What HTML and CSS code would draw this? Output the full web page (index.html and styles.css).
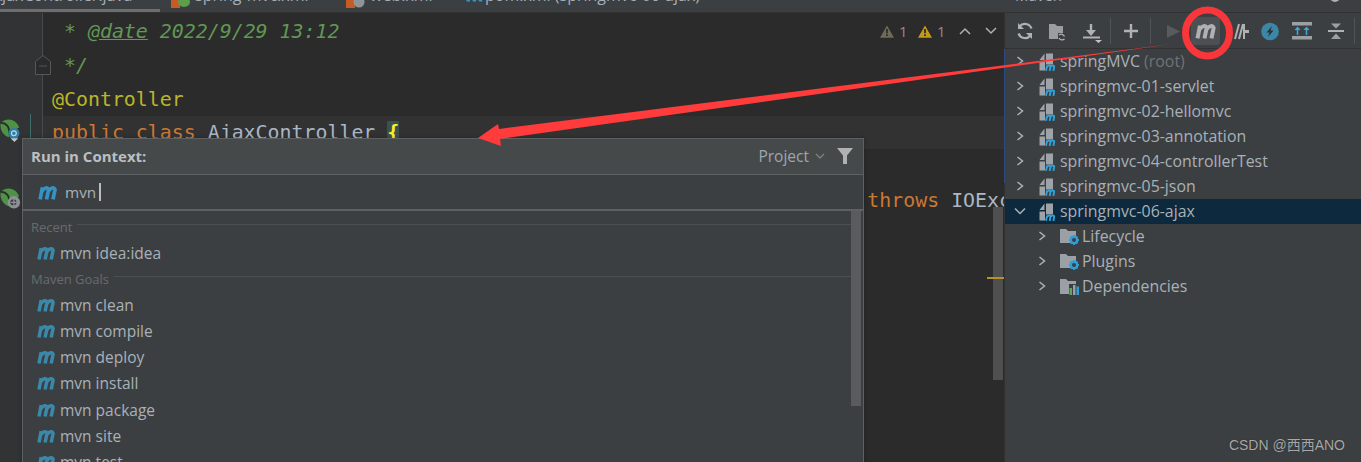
FILE: index.html
```html
<!DOCTYPE html>
<html lang="en">
<head>
<meta charset="utf-8">
<title>Run in Context</title>
<link rel="stylesheet" href="styles.css">
</head>
<body>
<svg class="defs" aria-hidden="true">
  <symbol id="m" viewBox="0 0 18 14"><path d="M2 13.500 4.200 2.200M3.900 5.600C5.600 2.400 9.600 1.600 10 4.400L8.100 13.500M10 5.600C11.700 2.400 15.800 1.600 16.100 4.400L14.200 13.500" fill="none" stroke="currentColor" stroke-width="3.500"/></symbol>
  <symbol id="module" viewBox="0 0 18 20">
    <path d="M.5 9 5.500 2.500V9zM7 2.500h7v11H7zM.5 10.500H6V19.500H.5z" fill="#9da3a8"/>
    <path d="M7 19.800 8.200 14.500M8 16C8.800 14.300 11.300 14.100 11.500 15.500L10.700 19.800M11.500 16C12.300 14.300 15 14.100 15.200 15.500L14.400 19.800" fill="none" stroke="#2ea3dc" stroke-width="1.900"/>
  </symbol>
  <symbol id="gear-folder" viewBox="0 0 22 20">
    <path d="M1 3h6l2 2h8v6h-6v6H1z" fill="#9aa0a5"/>
    <circle cx="15" cy="14" r="3.200" fill="none" stroke="#2f9fd8" stroke-width="2.400"/>
    <path d="M15 9v2M15 17v2M10 14h2M18 14h2M11.500 10.500l1.400 1.400M17.100 16.100l1.400 1.400M18.500 10.500l-1.400 1.400M12.900 16.100l-1.400 1.400" stroke="#2f9fd8" stroke-width="1.800"/>
  </symbol>
  <symbol id="dep-folder" viewBox="0 0 22 20">
    <path d="M1 3h6l2 2h8v3h-7v10H1z" fill="#9aa0a5"/>
    <rect x="10.500" y="12" width="2.500" height="7" fill="#62a85b"/>
    <rect x="14" y="9" width="2.500" height="10" fill="#9aa0a5"/>
    <rect x="17.500" y="10.500" width="2.500" height="8.500" fill="#2f9fd8"/>
  </symbol>
  <symbol id="chev-r" viewBox="0 0 12 12"><path d="M3.500 2 8.500 6 3.500 10" fill="none" stroke="#afb1b3" stroke-width="1.500"/></symbol>
  <symbol id="chev-d" viewBox="0 0 12 12"><path d="M1 3.500 6 8.500 11 3.500" fill="none" stroke="#afb1b3" stroke-width="1.500"/></symbol>
</svg>

<div class="ide">
  <main class="main">
    <nav class="tabs">
      <div class="tab tab-active"><span class="tab-label tab-label-first">AjaxController.java</span></div>
      <div class="tab tab-spring">
        <svg class="tab-icon" viewBox="0 0 22 8"><rect x="1" width="9" height="8" fill="#c75b24"/><ellipse cx="14" cy="2" rx="6" ry="5" fill="#5d9e4d"/></svg>
        <span class="tab-label">spring-mvc.xml</span>
      </div>
      <div class="tab tab-web">
        <svg class="tab-icon" viewBox="0 0 22 8"><rect x="1" width="9" height="8" fill="#c75b24"/><circle cx="14" cy="2" r="5.500" fill="#8f9498"/></svg>
        <span class="tab-label">web.xml</span>
      </div>
      <div class="tab tab-pom">
        <svg class="tab-icon-m"><use href="#m"/></svg>
        <span class="tab-label">pom.xml (springmvc-06-ajax)</span>
      </div>
    </nav>

    <section class="editor">
      <div class="gutter">
        <svg class="bean" viewBox="0 0 24 26">
          <path d="M1 6C7 0 17 2 20 11L12 15 9 21C3 19 -1 12 1 6z" fill="#4f9247"/>
          <path d="M1 6C7 6 10 10 10 19" fill="none" stroke="#243024" stroke-width="1.800"/>
          <circle cx="14.500" cy="17" r="5.800" fill="#2f7fa8"/>
          <circle cx="14.500" cy="17" r="2.500" fill="none" stroke="#c7d3da" stroke-width="1.200"/>
          <path d="M11 22h8l-4 4z" fill="#c2c6c9"/>
        </svg>
        <svg class="bean bean-web" viewBox="0 0 24 26">
          <path d="M1 6C7 0 17 2 20 11L12 15 9 21C3 19 -1 12 1 6z" fill="#4f9247"/>
          <path d="M1 6C7 6 10 10 10 19" fill="none" stroke="#243024" stroke-width="1.800"/>
          <circle cx="14.500" cy="17" r="6.500" fill="#8d9296"/>
          <circle cx="14" cy="17" r="3.300" fill="#3c3f41"/>
          <path d="M11 17h7M14.500 11v12" stroke="#8d9296" stroke-width="1.300"/>
        </svg>
      </div>
      <svg class="fold" viewBox="0 0 16 20"><path d="M.5 19.500V6.500L8 .5l7.500 6v13z" fill="#2b2b2b" stroke="#555759"/><path d="M4 11h8" stroke="#555759"/></svg>
      <div class="code">
        <div class="line doc"> * <span class="doc-tag">@date</span> 2022/9/29 13:12</div>
        <div class="line doc"> */</div>
        <div class="line anno">@Controller</div>
        <div class="line line-current"><span class="kw">public class</span> AjaxController <span class="brace">{</span></div>
        <div class="line"></div>
        <div class="line line-long"><span class="kw">throws</span> IOException</div>
      </div>
      <div class="inspections">
        <svg class="warn" viewBox="0 0 16 14"><path d="M8 0 16 14H0z" fill="#6f6a58"/><path d="M7 4h2v5H7zM7 10h2v2H7z" fill="#2b2b2b"/></svg>
        <span class="warn-count">1</span>
        <svg class="warn warn-second" viewBox="0 0 16 14"><path d="M8 0 16 14H0z" fill="#c29b1b"/><path d="M7 4h2v5H7zM7 10h2v2H7z" fill="#2b2b2b"/></svg>
        <span class="warn-count">1</span>
        <svg class="insp-chev" viewBox="0 0 12 8"><path d="M1 7 6 2l5 5" fill="none" stroke="#afb1b3" stroke-width="1.500"/></svg>
        <svg class="insp-chev" viewBox="0 0 12 8"><path d="M1 1l5 5 5-5" fill="none" stroke="#afb1b3" stroke-width="1.500"/></svg>
      </div>
      <div class="editor-scroll"></div>
      <div class="editor-mark"></div>
    </section>
  </main>

  <aside class="panel">
    <header class="panel-head">
      <span class="panel-title">Maven</span>
      <svg class="panel-gear" viewBox="0 0 14 14"><circle cx="7" cy="7" r="5" fill="#afb1b3"/></svg>
    </header>
    <div class="toolbar">
      <svg class="tool" viewBox="0 0 30 30"><g fill="none" stroke="#afb1b3" stroke-width="2.200"><path d="M21.500 12.500A7 7 0 0 0 9.500 10.500"/><path d="M8.500 17.500A7 7 0 0 0 20.500 19.500"/></g><path d="M8 7v6h6zM22 23v-6h-6z" fill="#afb1b3"/></svg>
      <svg class="tool tool-tight" viewBox="0 0 30 30"><path d="M8 8h6l2 2h6v7h-5v6H8z" fill="#9b9d9f"/><g fill="none" stroke="#afb1b3" stroke-width="1.200"><path d="M23.500 20.500A3.500 3.500 0 0 0 18 19"/><path d="M18 22A3.500 3.500 0 0 0 23.500 23"/></g></svg>
      <svg class="tool tool-wide" viewBox="0 0 30 30"><path d="M15 8v9" stroke="#afb1b3" stroke-width="2.400"/><path d="M10 14h10l-5 6z" fill="#afb1b3"/><path d="M7 21.500h17" stroke="#afb1b3" stroke-width="2"/><path d="M19 24h7l-3.500 3z" fill="#c2c4c6"/></svg>
      <span class="sep"></span>
      <svg class="tool" viewBox="0 0 30 30"><path d="M15 8v14M8 15h14" stroke="#afb1b3" stroke-width="2.400"/></svg>
      <span class="sep"></span>
      <svg class="tool tool-play" viewBox="0 0 30 30"><path d="M8 9 21 15.500 8 22z" fill="#585b5d"/></svg>
      <span class="tool-active"><svg class="tool-m"><use href="#m"/></svg></span>
      <svg class="tool tool-skip" viewBox="0 0 30 30"><path d="M10 23 14 8M14 23 18 8" stroke="#afb1b3" stroke-width="2"/><path d="M18 8h2v6h4v3h-4v6h-2z" fill="#afb1b3"/></svg>
      <svg class="tool" viewBox="0 0 30 30"><circle cx="15" cy="15.500" r="8.800" fill="#3a87a8"/><path d="M17 10 11.500 16.500h3L13 21l5.500-6.500h-3z" fill="#2f3133"/></svg>
      <svg class="tool tool-next" viewBox="0 0 30 30"><path d="M5 6h20v3.500H5zM5 20h20v3.500H5z" fill="#9da0a2"/><path d="M10.500 13v6M19.500 13v6" stroke="#3ea8de" stroke-width="1.500"/><path d="M7.500 14l3-3.500 3 3.500zM16.500 14l3-3.500 3 3.500z" fill="#3ea8de"/></svg>
      <svg class="tool tool-next" viewBox="0 0 30 30"><path d="M7 15h16" stroke="#afb1b3" stroke-width="2"/><path d="M10 7.500h10L15 12.500zM15 17.500 20 23H10z" fill="#9da0a2"/></svg>
      <span class="sep sep-last"></span>
    </div>
    <ul class="tree">
      <li class="row"><svg class="chev"><use href="#chev-r"/></svg><svg class="mod"><use href="#module"/></svg><span>springMVC <span class="dim">(root)</span></span></li>
      <li class="row"><svg class="chev"><use href="#chev-r"/></svg><svg class="mod"><use href="#module"/></svg><span>springmvc-01-servlet</span></li>
      <li class="row"><svg class="chev"><use href="#chev-r"/></svg><svg class="mod"><use href="#module"/></svg><span>springmvc-02-hellomvc</span></li>
      <li class="row"><svg class="chev"><use href="#chev-r"/></svg><svg class="mod"><use href="#module"/></svg><span>springmvc-03-annotation</span></li>
      <li class="row"><svg class="chev"><use href="#chev-r"/></svg><svg class="mod"><use href="#module"/></svg><span>springmvc-04-controllerTest</span></li>
      <li class="row"><svg class="chev"><use href="#chev-r"/></svg><svg class="mod"><use href="#module"/></svg><span>springmvc-05-json</span></li>
      <li class="row row-selected"><svg class="chev"><use href="#chev-d"/></svg><svg class="mod"><use href="#module"/></svg><span>springmvc-06-ajax</span></li>
      <li class="row row-child"><svg class="chev"><use href="#chev-r"/></svg><svg class="folder"><use href="#gear-folder"/></svg><span>Lifecycle</span></li>
      <li class="row row-child"><svg class="chev"><use href="#chev-r"/></svg><svg class="folder"><use href="#gear-folder"/></svg><span>Plugins</span></li>
      <li class="row row-child"><svg class="chev"><use href="#chev-r"/></svg><svg class="folder"><use href="#dep-folder"/></svg><span>Dependencies</span></li>
    </ul>
  </aside>
</div>

<div class="popup">
  <div class="popup-head">
    <strong class="popup-title">Run in Context:</strong>
    <span class="popup-scope">Project</span>
    <svg class="scope-chev" viewBox="0 0 10 6"><path d="M1 1l4 4 4-4" fill="none" stroke="#7d8082" stroke-width="1.400"/></svg>
    <svg class="funnel" viewBox="0 0 16 16"><path d="M0 0h16L10 7.500V16H6V7.500z" fill="#afb1b3"/></svg>
  </div>
  <div class="popup-input">
    <svg class="input-m"><use href="#m"/></svg>
    <span>mvn</span><span class="caret"></span>
  </div>
  <div class="popup-list">
    <div class="group"><span>Recent</span></div>
    <div class="item"><svg class="item-m"><use href="#m"/></svg>mvn idea:idea</div>
    <div class="group"><span>Maven Goals</span></div>
    <div class="item"><svg class="item-m"><use href="#m"/></svg>mvn clean</div>
    <div class="item"><svg class="item-m"><use href="#m"/></svg>mvn compile</div>
    <div class="item"><svg class="item-m"><use href="#m"/></svg>mvn deploy</div>
    <div class="item"><svg class="item-m"><use href="#m"/></svg>mvn install</div>
    <div class="item"><svg class="item-m"><use href="#m"/></svg>mvn package</div>
    <div class="item"><svg class="item-m"><use href="#m"/></svg>mvn site</div>
    <div class="item"><svg class="item-m"><use href="#m"/></svg>mvn test</div>
    <div class="popup-scroll"></div>
  </div>
</div>

<svg class="annotation" viewBox="0 0 1361 462">
  <path d="M478 138 498 124 499 129 1172 44 500 139 501 146z" fill="#ff3b3b"/>
  <ellipse cx="1207.500" cy="33" rx="22" ry="23" fill="none" stroke="#f9363a" stroke-width="7"/>
</svg>

<div class="watermark">CSDN @西西ANO</div>
</body>
</html>
```

FILE: styles.css
```css
* { box-sizing: border-box; }

html, body {
  margin: 0;
  height: 462px;
  overflow: hidden;
  background: #3c3f41;
}

body {
  position: relative;
  font-family: "Open Sans", "Noto Sans", sans-serif;
}

.defs { position: absolute; width: 0; height: 0; }

.ide {
  display: grid;
  grid-template-columns: 1005px 356px;
  height: 462px;
}

/* tabs */
.main { min-width: 0; display: flex; flex-direction: column; overflow: hidden; }

.tabs {
  display: flex;
  flex: none;
  height: 13px;
  overflow: hidden;
  background: #3c3f41;
  border-bottom: 1px solid #323232;
  color: #a4aeb8;
  font-size: 16px;
}

.tab {
  display: flex;
  align-items: flex-start;
  height: 12px;
  position: relative;
}

.tab-active { width: 160px; background: #3c3f41; }
.tab-active::after {
  content: "";
  position: absolute;
  left: 0; right: 0; bottom: 0;
  height: 3px;
  background: #6c6f71;
}
.tab-spring { width: 172px; padding-left: 10px; }
.tab-web { width: 123px; padding-left: 13px; }
.tab-pom { padding-left: 11px; }

.tab-label { margin-top: -17px; line-height: 24px; white-space: nowrap; }
.tab-label-first { margin-left: -8px; }
.tab-icon { width: 22px; height: 8px; margin-right: 3px; flex: none; }
.tab-icon-m { width: 18px; height: 14px; margin-top: -12px; margin-right: 1px; color: #3592c4; }

/* editor */
.editor {
  position: relative;
  flex: 1;
  display: flex;
  background: #2b2b2b;
  border-right: 1px solid #323232;
}

.gutter {
  position: relative;
  flex: none;
  width: 43px;
  padding-top: 104px;
  background: #313335;
  border-right: 1px solid #484a4c;
}
.gutter::after {
  content: "";
  position: absolute;
  left: 30px; top: 101px;
  width: 1px; height: 27px;
  background: #3f6f6b;
}

.bean { display: block; width: 23px; height: 25px; }
.bean-web { margin-top: 44px; }

.fold { position: absolute; left: 35px; top: 42px; width: 16px; height: 20px; }

.code {
  flex: 1;
  min-width: 0;
  padding-top: 2px;
  overflow: hidden;
  font: 19.900px/33.600px "DejaVu Sans Mono", monospace;
  color: #a9b7c6;
}

.line { height: 33.600px; padding-left: 9px; white-space: pre; }
.line-current { background: #323232; }
.line-long { padding-top: 1px; }
.line-long .kw { margin-left: calc(68ch + 1px); }
.doc { color: #629755; font-style: italic; }
.doc-tag { text-decoration: underline; }
.anno { color: #bbb529; padding-top: 1px; }
.kw { color: #cc7832; }
.brace { background: #3b514d; color: #ffef28; font-weight: bold; }

.inspections {
  position: absolute;
  left: 880px; top: 10px;
  display: flex;
  align-items: center;
  height: 16px;
  font-size: 15px;
  color: #8b8e90;
}
.warn { width: 14px; height: 13px; }
.warn-count { margin-left: 5px; width: 13px; }
.warn-second { margin-left: 6px; }
.insp-chev { width: 12px; height: 8px; margin-left: 14px; }
.warn-count + .insp-chev { margin-left: 9px; }

.editor-scroll {
  position: absolute;
  left: 993px; top: 194px;
  width: 10px; height: 173px;
  background: #4f4f4f;
}
.editor-mark {
  position: absolute;
  left: 987px; top: 264px;
  width: 17px; height: 2px;
  background: #b6912c;
}

/* maven panel */
.panel {
  position: relative;
  display: flex;
  flex-direction: column;
  background: #3c3f41;
  color: #a9b1b8;
}

.panel-head {
  flex: none;
  height: 13px;
  overflow: hidden;
  border-bottom: 1px solid #323232;
  display: flex;
  justify-content: space-between;
  padding: 0 19px 0 10px;
  font-size: 15px;
}
.panel-title { margin-top: -17px; line-height: 24px; }
.panel-gear { width: 14px; height: 14px; margin-top: -10px; }

.toolbar {
  flex: none;
  display: flex;
  align-items: center;
  height: 36px;
  padding-left: 5px;
  border-bottom: 1px solid #323232;
}

.tool { width: 30px; height: 30px; flex: none; }
.tool-tight { margin-left: 1px; }
.tool-wide { margin-left: 5px; }
.tool-play { margin-left: 3px; }
.tool-skip { margin-left: 5px; }
.tool-next { margin-left: 2px; }
.tool-next + .tool-next { margin-left: 4px; }

.sep {
  flex: none;
  width: 1px;
  height: 26px;
  margin: 0 5px 0 4px;
  background: #515456;
}
.sep-last { margin-left: 3px; }

.tool-active {
  display: flex;
  align-items: center;
  justify-content: center;
  flex: none;
  width: 29px; height: 28px;
  margin-left: 2px;
  border-radius: 3px;
  background: #4c5052;
  color: #afb1b3;
}
.tool-m { width: 21px; height: 16px; }

.tree {
  margin: 0;
  padding: 0;
  list-style: none;
  font-size: 15.900px;
  position: relative;
}
.tree::before {
  content: "";
  position: absolute;
  left: -1px; top: 0;
  width: 1px; height: 134px;
  background: #2a4a80;
}

.row {
  display: flex;
  align-items: center;
  height: 25px;
  padding: 0 0 2px 9px;
  white-space: nowrap;
}
.row-selected { background: #0d293e; }
.row-child { padding-left: 31px; }

.chev { width: 12px; height: 12px; flex: none; }
.mod { width: 18px; height: 20px; margin: 0 3px 0 13px; flex: none; }
.folder { width: 22px; height: 20px; margin: 0 0 0 11px; flex: none; }
.row-child span { margin-left: 1px; }
.dim { color: #6f7375; }

/* popup */
.popup {
  position: absolute;
  left: 22px; top: 138px;
  width: 842px;
  height: 340px;
  background: #3c3f41;
  border: 1px solid #5e6163;
  color: #a9b1b8;
  box-shadow: 0 0 4px rgba(0, 0, 0, .25);
}

.popup-head {
  display: flex;
  align-items: center;
  height: 36px;
  padding: 0 10px 1px 8px;
  background: #45494a;
  border-bottom: 1px solid #5e6163;
  font-size: 15px;
}
.popup-title { flex: 1; color: #bbbfc2; font-weight: 700; }
.popup-scope { color: #9ea6ae; font-size: 15.500px; }
.scope-chev { width: 10px; height: 6px; margin: 0 0 0 6px; }
.funnel { width: 16px; height: 16px; margin-left: 12px; }

.popup-input {
  display: flex;
  align-items: center;
  height: 36px;
  padding-left: 15px;
  border-bottom: 2px solid #5e6163;
  font-size: 15.300px;
}
.input-m { width: 19px; height: 15px; margin-right: 8px; color: #3592c4; flex: none; }
.caret { width: 2px; height: 18px; margin-left: 3px; background: #bbbbbb; }

.popup-list { position: relative; padding-top: 2.500px; font-size: 15.500px; }

.group {
  display: flex;
  align-items: center;
  gap: 5px;
  height: 26px;
  padding-left: 8px;
  color: #686b6e;
  font-size: 13px;
}
.group::after {
  content: "";
  flex: 1;
  height: 1px;
  margin: 0 12px 4px 0;
  background: #4c4f51;
}

.item {
  display: flex;
  align-items: center;
  height: 26.200px;
  padding-left: 14px;
  white-space: nowrap;
}
.item-m { width: 18px; height: 14px; margin-right: 5px; color: #3a88aa; flex: none; }

.popup-scroll {
  position: absolute;
  left: 828px; top: 0;
  width: 10px; height: 195px;
  background: #595b5d;
}

/* screenshot annotation */
.annotation {
  position: absolute;
  left: 0; top: 0;
  width: 1361px; height: 462px;
  pointer-events: none;
}

.watermark {
  position: absolute;
  right: 16px; top: 436px;
  font: 14px/18px "Liberation Sans", "Noto Sans CJK SC", sans-serif;
  color: #a8a8a8;
  text-shadow: 0 0 1px #222;
}
```
